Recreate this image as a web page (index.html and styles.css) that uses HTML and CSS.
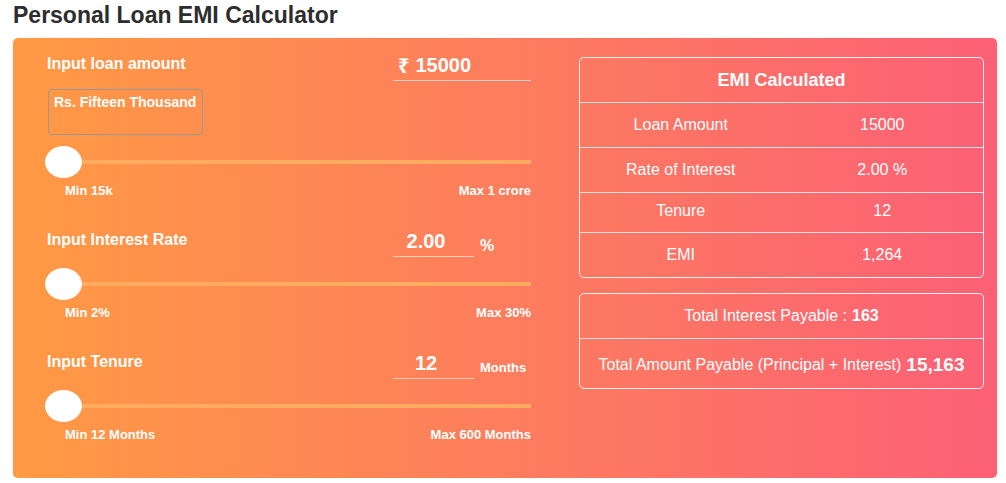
FILE: index.html
```html
<!DOCTYPE html>
<html lang="en">

<head>
    <meta charset="UTF-8">
    <meta name="viewport" content="width=device-width, initial-scale=1.0">
    <title>Personal Loan EMI Calculator</title>
    <link rel="stylesheet" href="styles.css">
</head>
<body>
<h1 class="page-title">Personal Loan EMI Calculator</h1>
<div class="calc-card">
    <div class="calc-inputs">
        <div class="field">
            <div class="field-head">
                <label class="field-label">Input loan amount</label>
                <div class="input-wrap input-wrap-amount">
                    <span class="rupee">₹</span>
                    <input type="text" class="field-input amount-input" value="15000">
                </div>
            </div>
            <div class="amount-words">Rs. Fifteen Thousand</div>
            <input type="range" class="range" min="15000" max="10000000" value="15000">
            <div class="range-limits">
                <span>Min 15k</span>
                <span>Max 1 crore</span>
            </div>
        </div>

        <div class="field">
            <div class="field-head">
                <label class="field-label">Input Interest Rate</label>
                <div class="input-wrap">
                    <input type="text" class="field-input small-input" value="2.00">
                    <span class="unit unit-percent">%</span>
                </div>
            </div>
            <input type="range" class="range" min="2" max="30" step="0.01" value="2">
            <div class="range-limits">
                <span>Min 2%</span>
                <span>Max 30%</span>
            </div>
        </div>

        <div class="field">
            <div class="field-head">
                <label class="field-label">Input Tenure</label>
                <div class="input-wrap">
                    <input type="text" class="field-input small-input" value="12">
                    <span class="unit unit-months">Months</span>
                </div>
            </div>
            <input type="range" class="range" min="12" max="600" value="12">
            <div class="range-limits">
                <span>Min 12 Months</span>
                <span>Max 600 Months</span>
            </div>
        </div>
    </div>

    <div class="calc-results">
        <div class="result-box">
            <div class="result-head">EMI Calculated</div>
            <div class="result-row">
                <span>Loan Amount</span>
                <span>15000</span>
            </div>
            <div class="result-row">
                <span>Rate of Interest</span>
                <span>2.00 %</span>
            </div>
            <div class="result-row result-row-short">
                <span>Tenure</span>
                <span>12</span>
            </div>
            <div class="result-row">
                <span>EMI</span>
                <span>1,264</span>
            </div>
        </div>

        <div class="result-box total-box">
            <div class="total-row">Total Interest Payable : <b class="total-interest">163</b></div>
            <div class="total-row total-row-big">Total Amount Payable (Principal + Interest) <b class="total-amount">15,163</b></div>
        </div>
    </div>
</div>
</body>

</html>
```

FILE: styles.css
```css
body {
    margin: 0;
    padding: 0 9px 0 13px;
    font-family: "Liberation Sans", Arial, sans-serif;
    background: #fff;
}

.page-title {
    margin: 2px 0 9px;
    font-size: 23px;
    font-weight: bold;
    color: #2d2d2d;
}

.calc-card {
    display: grid;
    grid-template-columns: 484px 405px;
    gap: 48px;
    padding: 12px 13px 36px 34px;
    border-radius: 5px;
    background: linear-gradient(to right, #ff9a44, #fc6076);
    box-shadow: 0 1px 3px rgba(0, 0, 0, 0.15);
    color: #fff;
}

.field {
    margin-top: 28px;
}

.field:first-child {
    margin-top: 0;
}

.field-head {
    display: grid;
    grid-template-columns: 346px 1fr;
    align-items: center;
}

.field-label {
    margin-bottom: 3px;
    font-size: 16px;
    font-weight: bold;
}

.input-wrap {
    display: flex;
    align-items: flex-end;
    height: 31px;
}

.input-wrap-amount {
    width: 138px;
    align-items: center;
    box-sizing: border-box;
    border-bottom: 1px solid #cdd0d2;
}

.rupee {
    padding-left: 5px;
    font-family: "Noto Sans", "DejaVu Sans", sans-serif;
    font-size: 20px;
    font-weight: bold;
}

.field-input {
    font-family: "Liberation Sans", Arial, sans-serif;
    font-size: 20px;
    font-weight: bold;
    color: #fff;
    background: transparent;
    border: none;
    outline: none;
    padding: 0;
}

.amount-input {
    width: 100px;
    height: 30px;
    padding-left: 6px;
}

.small-input {
    width: 81px;
    height: 31px;
    box-sizing: border-box;
    padding-right: 15px;
    text-align: center;
    border-bottom: 1px solid rgba(255, 255, 255, 0.6);
}

.unit {
    margin-left: 6px;
    font-weight: bold;
}

.unit-percent {
    font-size: 16px;
    padding-bottom: 2px;
}

.unit-months {
    font-size: 13px;
    padding-bottom: 4px;
}

.amount-words {
    width: 155px;
    height: 46px;
    box-sizing: border-box;
    margin: 8px 0 0 1px;
    padding: 4px 5px;
    border: 1px solid #9e9690;
    border-radius: 4px;
    font-size: 14px;
    font-weight: bold;
}

.range {
    -webkit-appearance: none;
    appearance: none;
    display: block;
    width: 486px;
    height: 32px;
    margin: 11px 0 0 -2px;
    background: transparent;
}

.range::-webkit-slider-runnable-track {
    height: 4px;
    background: #ffab60;
}

.range::-webkit-slider-thumb {
    -webkit-appearance: none;
    width: 37px;
    height: 32px;
    margin-top: -14px;
    border-radius: 50%;
    background: #fff;
}

.range-limits {
    display: flex;
    justify-content: space-between;
    margin-top: 5px;
    padding-left: 18px;
    font-size: 13px;
    line-height: 15px;
    font-weight: bold;
}

.calc-results {
    padding-top: 7px;
}

.result-box {
    border: 1px solid rgba(255, 255, 255, 0.9);
    border-radius: 5px;
    font-size: 16px;
}

.result-head {
    height: 45px;
    box-sizing: border-box;
    display: flex;
    align-items: center;
    justify-content: center;
    border-bottom: 1px solid #dee2e6;
    font-size: 18px;
    font-weight: bold;
}

.result-row {
    display: grid;
    grid-template-columns: 1fr 1fr;
    align-items: center;
    text-align: center;
    height: 45px;
    box-sizing: border-box;
    border-bottom: 1px solid #dee2e6;
}

.result-row-short {
    height: 40px;
    padding-bottom: 4px;
}

.result-row:last-child {
    height: 44px;
    border-bottom: none;
}

.total-box {
    margin-top: 15px;
}

.total-row {
    display: flex;
    align-items: center;
    justify-content: center;
    gap: 5px;
    height: 45px;
    box-sizing: border-box;
    border-bottom: 1px solid #dee2e6;
}

.total-row-big {
    height: 49px;
    padding-top: 2px;
    border-bottom: none;
}

.total-interest {
    font-size: 16px;
}

.total-amount {
    font-size: 19px;
}
```
